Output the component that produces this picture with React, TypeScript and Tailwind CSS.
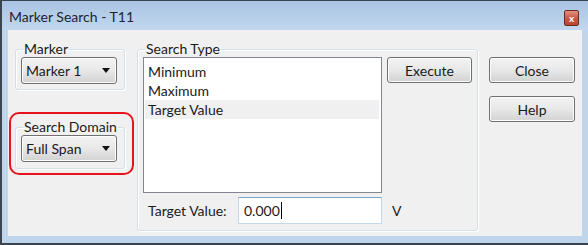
import type { ReactNode } from 'react';

const font = "font-['Lato',sans-serif]";

function Combo({ label }: { label: string }) {
  return (
    <div className="flex h-[27px] w-[96px] items-center justify-between rounded-[3px] border border-[#707070] bg-gradient-to-b from-[#f3f3f3] via-[#e8e8e8] to-[#d2d2d2] pl-[4px] pr-[6px] shadow-[inset_0_0_0_1px_#fcfcfc] text-[#1a1a1a]">
      <span>{label}</span>
      <svg width="8" height="5" viewBox="0 0 8 5">
        <path d="M0 0H8L4 5Z" fill="#111" />
      </svg>
    </div>
  );
}

function WinButton({ children, w }: { children: ReactNode; w: string }) {
  return (
    <div className={`flex h-[26px] ${w} items-center justify-center rounded-[3px] border border-[#707070] bg-gradient-to-b from-[#f3f3f3] via-[#e8e8e8] to-[#d2d2d2] shadow-[inset_0_0_0_1px_#fcfcfc] text-[#1a1a1a]`}>
      {children}
    </div>
  );
}

function Group({ title, className, children }: { title: string; className: string; children: ReactNode }) {
  return (
    <fieldset className={`rounded-[3px] border border-[#d5dfe5] shadow-[inset_1px_1px_0_#ffffff,1px_1px_0_#ffffff] ${className}`}>
      <legend className="ml-[2px] whitespace-nowrap px-[1px] leading-[16px] text-[#1a1a1a]">{title}</legend>
      {children}
    </fieldset>
  );
}

export default function App() {
  const items = ['Minimum', 'Maximum', 'Target Value'];

  return (
    <div className={`${font} text-[14px] flex h-[245px] w-[588px] flex-col border-l-2 border-t border-b-2 border-[#3b4550] bg-[#bfd5ec]`}>
      {/* title bar */}
      <div className="flex h-[29px] items-center justify-between bg-gradient-to-b from-[#a9c4e2] to-[#c1d7ee] pl-[7px] pr-[9px]">
        <span className="pt-[2px] text-[14px] text-[#1b2430]">Marker Search - T11</span>
        <div className="mt-[4px] flex h-[16px] w-[15px] items-center justify-center rounded-[2px] border border-[#6d2a22] bg-gradient-to-b from-[#e4907f] via-[#c85a48] to-[#b8452f]">
          <span className="text-[10px] font-bold leading-none text-white">x</span>
        </div>
      </div>

      {/* client area */}
      <div className="ml-[6px] mr-[6px] flex h-[206px] bg-[#f0f0f0] pl-[1px] pt-[11px]">
        {/* left column */}
        <div className="flex w-[125px] flex-col">
          <Group title="Marker" className="ml-[6px] w-[110px] px-[5px] pb-[5px]">
            <Combo label="Marker 1" />
          </Group>
          <div className="mt-[22px] h-[63px] w-[125px] rounded-[10px] border-2 border-[#e8141c] pl-[4px] pt-[5px]">
            <Group title="Search Domain" className="w-[110px] px-[5px] pb-[6px]">
              <Combo label="Full Span" />
            </Group>
          </div>
        </div>

        {/* search type */}
        <Group title="Search Type" className="ml-[3px] h-[190px] w-[341px] px-[5px]">
          <div className="flex">
            <div className="h-[136px] w-[239px] border border-[#828790] bg-white pl-[1px] pr-[2px] pt-[4px] text-[#1a1a1a]">
              {items.map((it, i) => (
                <div key={it} className={`flex h-[19px] items-center pl-[3px] ${i === 2 ? 'bg-[#f0f0f0]' : ''}`}>
                  {it}
                </div>
              ))}
            </div>
            <div className="ml-[5px]">
              <WinButton w="w-[85px]">Execute</WinButton>
            </div>
          </div>
          <div className="mt-[4px] flex items-center text-[#1a1a1a]">
            <span className="w-[95px] pl-[5px]">Target Value:</span>
            <div className="flex h-[27px] w-[144px] items-center border border-[#c5d9ed] border-t-[#7ba3cf] bg-white pl-[5px]">
              <span>0.000</span>
              <span className="ml-[1px] h-[17px] w-[1px] bg-black" />
            </div>
            <span className="ml-[10px]">V</span>
          </div>
        </Group>

        {/* buttons */}
        <div className="ml-[11px] flex flex-col gap-[13px] pt-[16px]">
          <WinButton w="w-[86px]">Close</WinButton>
          <WinButton w="w-[86px]">Help</WinButton>
        </div>
      </div>
    </div>
  );
}
